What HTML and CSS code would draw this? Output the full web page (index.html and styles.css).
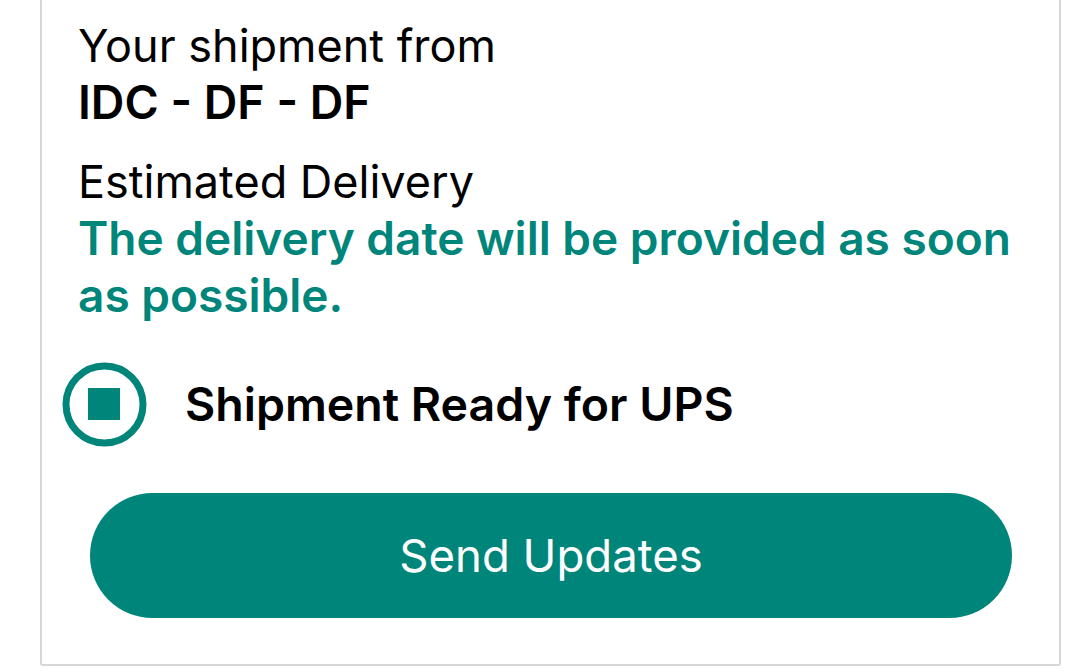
FILE: index.html
```html
<!DOCTYPE html>
<html lang="en">
<head>
    <meta charset="UTF-8">
    <meta name="viewport" content="width=device-width, initial-scale=1.0">
    <title>Shipment Status</title>
    <link rel="stylesheet" href="styles.css">
</head>
<body>
    <div class="card">
        <div class="info">
            <div class="origin">
                <p class="label">Your shipment from</p>
                <p class="value">IDC - DF - DF</p>
            </div>
            <div class="delivery">
                <p class="label">Estimated Delivery</p>
                <p class="notice">The delivery date will be provided as soon as possible.</p>
            </div>
        </div>
        <div class="status">
            <svg class="status-icon" width="85" height="85" viewBox="0 0 85 85">
                <circle cx="42.5" cy="42.5" r="38.5" fill="none" stroke="#00857b" stroke-width="7"/>
                <rect x="26" y="26" width="32" height="32" fill="#00857b"/>
            </svg>
            <span class="status-text">Shipment Ready for UPS</span>
        </div>
        <button class="send-btn">Send Updates</button>
    </div>
</body>
</html>
```

FILE: styles.css
```css
body {
    margin: 0;
    padding: 0;
    background-color: #fff;
    font-family: Inter, "Noto Sans", sans-serif;
    color: #000;
}
.card {
    box-sizing: border-box;
    width: 1021px;
    margin-left: 40px;
    padding: 17px 0 46px 20px;
    border: 2px solid #d6d6d6;
    border-top: none;
    border-radius: 0 0 3px 3px;
}
.info {
    padding-left: 16px;
}
p {
    margin: 0;
    font-size: 45px;
    line-height: 57px;
}
.value {
    font-size: 46.5px;
    font-weight: 600;
}
.delivery {
    margin-top: 22px;
}
.notice {
    color: #00857b;
    font-size: 46px;
    font-weight: 600;
    padding-right: 20px;
}
.status {
    display: flex;
    align-items: center;
    gap: 38px;
    margin-top: 38px;
}
.status-icon {
    flex-shrink: 0;
}
.status-text {
    font-size: 46.5px;
    line-height: 57px;
    font-weight: 600;
}
.send-btn {
    display: block;
    width: 922px;
    height: 125px;
    margin: 46px 0 0 28px;
    border: none;
    border-radius: 63px;
    background-color: #00857b;
    color: #fff;
    font-family: Inter, "Noto Sans", sans-serif;
    font-size: 45.5px;
    font-weight: 400;
    cursor: pointer;
}
```
